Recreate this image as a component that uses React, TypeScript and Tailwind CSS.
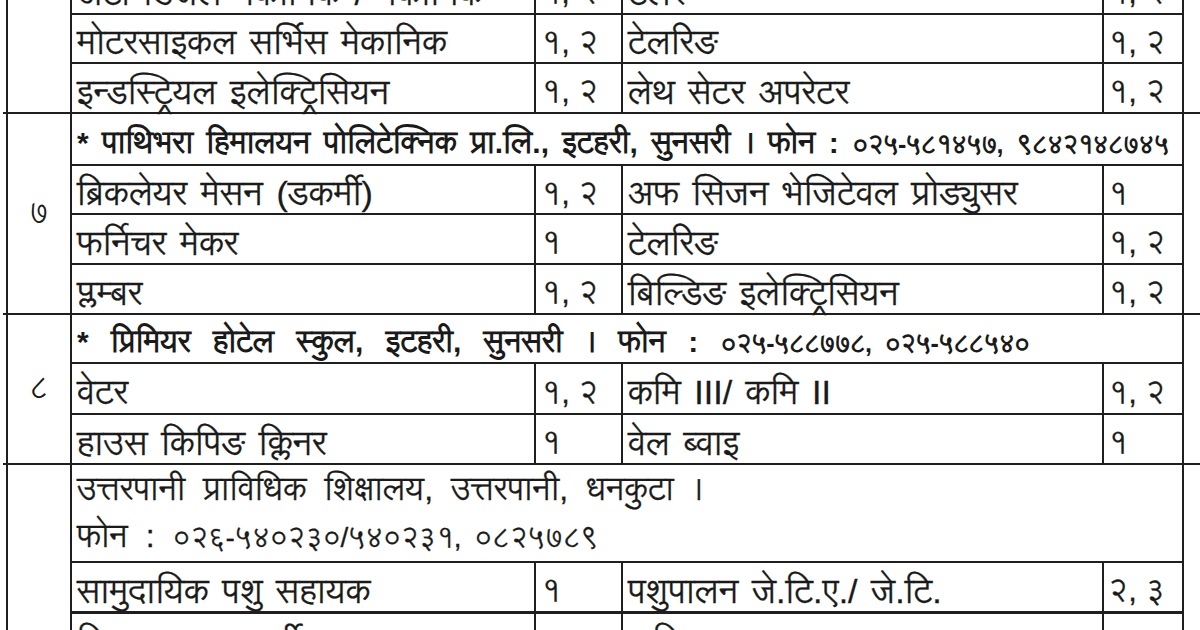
type Item = [string, string, string, string];

type Line = { text: string; phone?: string };

type Section = {
  serial: string;
  header?: Line[];
  headerCls?: string;
  phoneCls?: string;
  rows: Item[];
  rowH: string[];
};

const sections: Section[] = [
  {
    serial: '६',
    header: [{ text: '* सगरमाथा प्राविधिक शिक्षालय, इटहरी, सुनसरी । फोन : ', phone: '०२५-५८०१२३' }],
    headerCls: 'h-[50px] pt-[8px] text-[30px] font-bold [word-spacing:5px]',
    phoneCls: 'text-[25px] tracking-[-1px] [word-spacing:8px]',
    rows: [
      ['सहायक सब-ओभरसियर', '१, २', 'ब्युटिसियन', '१, २'],
      ['कम्प्युटर अपरेटर', '१, २', 'सिलाई कटाई', '१, २'],
      ['अटो डिजेल मेकानिक / मेकानिक', '१, २', 'टेलर', '१, २'],
      ['मोटरसाइकल सर्भिस मेकानिक', '१, २', 'टेलरिङ', '१, २'],
      ['इन्डस्ट्रियल इलेक्ट्रिसियन', '१, २', 'लेथ सेटर अपरेटर', '१, २'],
    ],
    rowH: ['h-[50px]', 'h-[50px]', 'h-[50px]', 'h-[49px]', 'h-[50px]'],
  },
  {
    serial: '७',
    header: [
      {
        text: '* पाथिभरा हिमालयन पोलिटेक्निक प्रा.लि., इटहरी, सुनसरी । फोन : ',
        phone: '०२५-५८१४५७, ९८४२१४८७४५',
      },
    ],
    headerCls: 'h-[50px] pt-[8px] text-[30px] font-bold [word-spacing:5px]',
    phoneCls: 'text-[25px] tracking-[-1px] [word-spacing:8px]',
    rows: [
      ['ब्रिकलेयर मेसन (डकर्मी)', '१, २', 'अफ सिजन भेजिटेवल प्रोड्युसर', '१'],
      ['फर्निचर मेकर', '१', 'टेलरिङ', '१, २'],
      ['प्लम्बर', '१, २', 'बिल्डिङ इलेक्ट्रिसियन', '१, २'],
    ],
    rowH: ['h-[49px]', 'h-[50px]', 'h-[50px]'],
  },
  {
    serial: '८',
    header: [
      {
        text: '* प्रिमियर होटेल स्कुल, इटहरी, सुनसरी । फोन : ',
        phone: '०२५-५८८७७८, ०२५-५८८५४०',
      },
    ],
    headerCls: 'h-[47px] pt-[8px] text-[30px] font-bold [word-spacing:14px]',
    phoneCls: 'text-[25px] tracking-[-1px] [word-spacing:8px]',
    rows: [
      ['वेटर', '१, २', 'कमि III/ कमि II', '१, २'],
      ['हाउस किपिङ क्लिनर', '१', 'वेल ब्वाइ', '१'],
    ],
    rowH: ['h-[51px]', 'h-[50px]'],
  },
  {
    serial: '९',
    header: [
      { text: 'उत्तरपानी प्राविधिक शिक्षालय, उत्तरपानी, धनकुटा ।' },
      { text: 'फोन : ', phone: '०२६-५४०२३०/५४०२३१, ०८२५७८९' },
    ],
    headerCls: 'h-[96px] text-[32px] [word-spacing:9px] [-webkit-text-stroke:0.3px_#1a1a1a]',
    phoneCls: 'text-[28px] tracking-[-0.5px] [word-spacing:6px]',
    rows: [
      ['सामुदायिक पशु सहायक', '१', 'पशुपालन जे.टि.ए./ जे.टि.', '२, ३'],
      ['विद्युत जडान कर्मी', '१', 'कृषि प्रसार सहायक', '१'],
      ['सिलाई कटाई', '१', 'जुनियर प्लम्बर', '१'],
      ['कम्प्युटर हार्डवेयर', '१', 'ब्युटिसियन', '१'],
      ['भेटेरिनरी सहायक', '१', 'कृषि सहायक', '१'],
      ['ग्रामीण विद्युत', '१', 'सिभिल सहायक', '१'],
    ],
    rowH: ['h-[50px]', 'h-[51px]', 'h-[50px]', 'h-[50px]', 'h-[50px]', 'h-[50px]'],
  },
];

function Row({ item, h, top, thick }: { item: Item; h: string; top: boolean; thick: boolean }) {
  return (
    <div
      className={`grid grid-cols-[464px_87px_481px_80px] border-[#1f1f1f] text-[34px] [word-spacing:4px] [-webkit-text-stroke:0.3px_#1a1a1a] ${h} ${
        top ? (thick ? 'border-t-[3px]' : 'border-t-2') : ''
      }`}
    >
      <div className="flex items-center border-r-2 border-[#1f1f1f] pt-[7px] pl-[5px] whitespace-nowrap">
        {item[0]}
      </div>
      <div className="flex items-center border-r-2 border-[#1f1f1f] pt-[7px] pl-[5px] text-[31px] whitespace-nowrap [word-spacing:0px]">
        {item[1]}
      </div>
      <div className="flex items-center border-r-2 border-[#1f1f1f] pt-[7px] pl-[5px] whitespace-nowrap">
        {item[2]}
      </div>
      <div className="flex items-center pt-[7px] pl-[4px] text-[31px] whitespace-nowrap [word-spacing:0px]">
        {item[3]}
      </div>
    </div>
  );
}

function Block({ s }: { s: Section }) {
  return (
    <div className="flex border-t-2 border-[#1f1f1f]">
      <div className="w-[3px] shrink-0" />
      <div className="flex w-[66px] shrink-0 items-center justify-center border-l-2 border-r-2 border-[#1f1f1f] pb-[2px] text-[30px]">
        {s.serial}
      </div>
      <div className="flex w-[1112px] flex-col border-r-2 border-[#1f1f1f]">
        {s.header && (
          <div className={`flex flex-col justify-center overflow-hidden pl-[5px] whitespace-nowrap ${s.headerCls}`}>
            {s.header.map((line) => (
              <div key={line.text} className="leading-[47px]">
                {line.text}
                {line.phone && <span className={s.phoneCls}>{line.phone}</span>}
              </div>
            ))}
          </div>
        )}
        {s.rows.map((r, i) => (
          <Row
            key={r[0]}
            item={r}
            h={s.rowH[i]}
            top={i > 0 || !!s.header}
            thick={r[0] === 'विद्युत जडान कर्मी'}
          />
        ))}
      </div>
    </div>
  );
}

export default function App() {
  return (
    <div className="h-[630px] w-[1200px] overflow-hidden bg-white leading-none text-[#1a1a1a] [font-family:'Liberation_Sans','Lohit_Devanagari','Noto_Sans_Devanagari',sans-serif]">
      <div className="-mt-[189px] ml-[3px]">
        {sections.map((s) => (
          <Block key={s.serial} s={s} />
        ))}
      </div>
    </div>
  );
}
